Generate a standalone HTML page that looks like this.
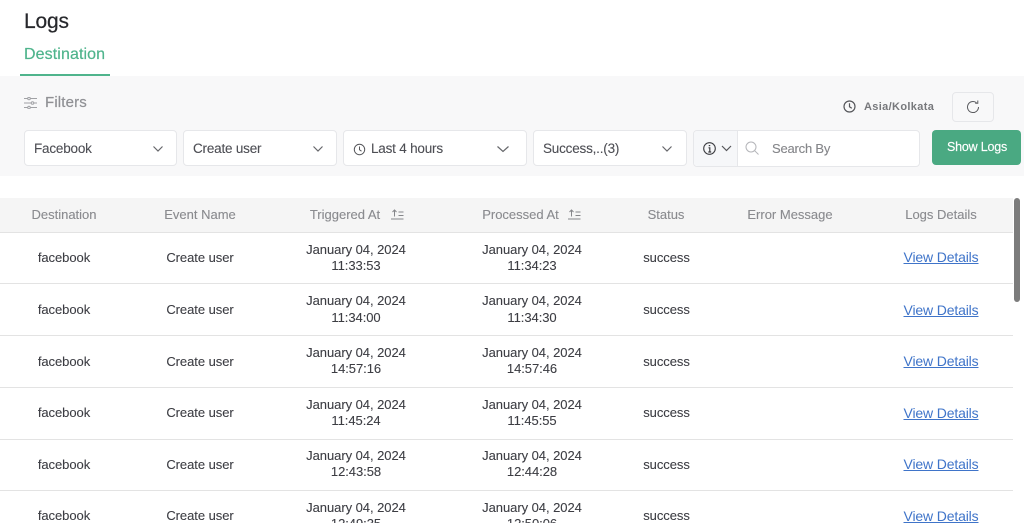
<!DOCTYPE html>
<html><head><meta charset="utf-8"><style>
html,body{margin:0;padding:0;background:#fff}
body{width:1024px;height:523px;overflow:hidden;position:relative;font-family:"Liberation Sans",sans-serif;color:#33343a}
#w{left:0;top:0;width:1024px;height:523px;overflow:hidden;filter:blur(.3px)}
div,a,svg{position:absolute}
.t{white-space:nowrap;line-height:16px}
.c{transform:translateX(-50%);text-align:center}
.box{background:#fff;border:1px solid #e6e7ea;border-radius:4px;box-sizing:border-box}
.f{font-size:13.5px;letter-spacing:-.2px;color:#4d4e54;top:141px;-webkit-text-stroke:.1px #4d4e54}
.h{font-size:13px;letter-spacing:0;color:#8a8b8f;top:207px;-webkit-text-stroke:.12px #8a8b8f}
.r{font-size:13px;letter-spacing:-.05px;color:#3c3d43;margin-top:1px;-webkit-text-stroke:.1px #3c3d43}
.l{left:0;width:1013px;height:1px;background:#e3e3e3}
a{font-size:14px;letter-spacing:-.15px;color:#3f74c9;text-decoration:underline}
svg{fill:none}
</style></head><body><div id="w">
<div class="t" style="left:24px;top:10px;font-size:21px;line-height:24px;letter-spacing:-.2px;color:#27282c;-webkit-text-stroke:.2px #27282c">Logs</div>
<div class="t" style="left:24px;top:46px;font-size:16px;line-height:18px;letter-spacing:.1px;color:#4fb48c;-webkit-text-stroke:.2px #4fb48c">Destination</div>
<div style="left:0;top:76px;width:1024px;height:100px;background:#f8f8f9"></div>
<div style="left:20px;top:74px;width:90px;height:2px;background:#4fb48c"></div>

<svg style="left:24px;top:97px" width="13" height="12" viewBox="0 0 13 12" stroke="#a0a1a5" stroke-width="1"><path d="M0 1.500H13M0 6H13M0 10.500H13"/><circle cx="5" cy="1.500" r="1.300" fill="#f8f8f9"/><circle cx="8.500" cy="6" r="1.300" fill="#f8f8f9"/><circle cx="5" cy="10.500" r="1.300" fill="#f8f8f9"/></svg>
<div class="t" style="left:45px;top:95px;font-size:15px;letter-spacing:.15px;color:#909195;-webkit-text-stroke:.2px #909195">Filters</div>

<svg style="left:843px;top:100px" width="13" height="13" viewBox="0 0 13 13" stroke="#55565a" stroke-width="1.200"><circle cx="6.500" cy="6.500" r="5.500"/><path d="M6.500 3.200V6.800L8.800 8.300"/></svg>
<div class="t" style="left:864px;top:99px;font-size:11px;font-weight:bold;letter-spacing:.35px;color:#77787c">Asia/Kolkata</div>
<div class="box" style="left:952px;top:92px;width:42px;height:30px;background:#f8f8f9"></div>
<svg style="left:966px;top:100px" width="14" height="14" viewBox="0 0 14 14" stroke="#5a5b5f" stroke-width="1"><path d="M12.500 7A5.500 5.500 0 1 1 10.500 2.800"/><path d="M10.800 .5V3.200H8.200" transform="translate(1 0)"/></svg>

<div class="box" style="left:24px;top:130px;width:153px;height:36px"></div>
<div class="t f" style="left:34px">Facebook</div>
<svg style="left:152px;top:145px" width="12" height="8" viewBox="0 0 12 8" stroke="#66676b" stroke-width="1.200"><path d="M1.500 1.500L6 6L10.500 1.500"/></svg>
<div class="box" style="left:183px;top:130px;width:154px;height:36px"></div>
<div class="t f" style="left:193px">Create user</div>
<svg style="left:312px;top:145px" width="12" height="8" viewBox="0 0 12 8" stroke="#66676b" stroke-width="1.200"><path d="M1.500 1.500L6 6L10.500 1.500"/></svg>
<div class="box" style="left:343px;top:130px;width:184px;height:36px"></div>
<svg style="left:353px;top:143px" width="13" height="13" viewBox="0 0 13 13" stroke="#55565a" stroke-width="1"><circle cx="6.500" cy="6.500" r="5.200"/><path d="M6.500 3.500V6.800L8.500 8.200"/></svg>
<div class="t f" style="left:371px">Last 4 hours</div>
<svg style="left:496px;top:145px" width="14" height="8" viewBox="0 0 14 8" stroke="#66676b" stroke-width="1.200"><path d="M1.500 1.500L7 6.500L12.500 1.500"/></svg>
<div class="box" style="left:533px;top:130px;width:154px;height:36px"></div>
<div class="t f" style="left:543px">Success,..(3)</div>
<svg style="left:661px;top:145px" width="12" height="8" viewBox="0 0 12 8" stroke="#66676b" stroke-width="1.200"><path d="M1.500 1.500L6 6L10.500 1.500"/></svg>

<div class="box" style="left:693px;top:130px;width:227px;height:37px"></div>
<div style="left:694px;top:131px;width:43px;height:35px;background:#f6f7f9;border-right:1px solid #e6e7ea;border-radius:4px 0 0 4px"></div>
<svg style="left:703px;top:142px" width="13" height="13" viewBox="0 0 13 13" stroke="#3c3d41" stroke-width="1.100"><circle cx="6.500" cy="6.500" r="5.800"/><path d="M5.500 5.800H6.800V10M5.300 10H8.200" stroke-width="1.200"/><path d="M6.500 3V4.200" stroke-width="1.500"/></svg>
<svg style="left:721px;top:145px" width="11" height="7" viewBox="0 0 11 7" stroke="#55565a" stroke-width="1.200"><path d="M1 1L5.500 5.500L10 1"/></svg>
<svg style="left:745px;top:141px" width="14" height="14" viewBox="0 0 14 14" stroke="#b4b5b9" stroke-width="1"><circle cx="6" cy="6" r="5"/><path d="M9.700 9.700L13.500 13.500"/></svg>
<div class="t" style="left:772px;top:141px;font-size:13px;letter-spacing:-.2px;color:#85868a;-webkit-text-stroke:.12px #85868a">Search By</div>
<div style="left:932px;top:130px;width:89px;height:35px;background:#4aa982;border-radius:4px"></div>
<div class="t c" style="left:977px;top:139px;font-size:12.500px;letter-spacing:-.2px;color:#fff;-webkit-text-stroke:.15px #fff">Show Logs</div>

<div style="left:0;top:198px;width:1013px;height:34px;background:#f5f5f5;border-bottom:1px solid #e3e3e3"></div>
<div class="t h c" style="left:64px">Destination</div>
<div class="t h c" style="left:200px">Event Name</div>
<div class="t h c" style="left:345px">Triggered At</div>
<svg style="left:391px;top:209px" width="13" height="11" viewBox="0 0 13 11" stroke="#85868a" stroke-width="1"><path d="M3.500 7.500V1M1.500 3L3.500 1L5.500 3M7.500 3H12.500M7.500 6.500H12.500M0 10H12.500"/></svg>
<div class="t h c" style="left:520.500px">Processed At</div>
<svg style="left:568px;top:209px" width="13" height="11" viewBox="0 0 13 11" stroke="#85868a" stroke-width="1"><path d="M3.500 7.500V1M1.500 3L3.500 1L5.500 3M7.500 3H12.500M7.500 6.500H12.500M0 10H12.500"/></svg>
<div class="t h c" style="left:666px">Status</div>
<div class="t h c" style="left:790px">Error Message</div>
<div class="t h c" style="left:941px">Logs Details</div>

<div class="t r c" style="left:64px;top:249px">facebook</div><div class="t r c" style="left:200px;top:249px">Create user</div>
<div class="t r c" style="left:356px;top:241px">January 04, 2024</div><div class="t r c" style="left:356px;top:257px">11:33:53</div>
<div class="t r c" style="left:532px;top:241px">January 04, 2024</div><div class="t r c" style="left:532px;top:257px">11:34:23</div>
<div class="t r c" style="left:666.500px;top:249px">success</div><a class="t c" href="#" style="left:941px;top:249px">View Details</a>
<div class="l" style="top:283px"></div>

<div class="t r c" style="left:64px;top:301px">facebook</div><div class="t r c" style="left:200px;top:301px">Create user</div>
<div class="t r c" style="left:356px;top:292px">January 04, 2024</div><div class="t r c" style="left:356px;top:309px">11:34:00</div>
<div class="t r c" style="left:532px;top:292px">January 04, 2024</div><div class="t r c" style="left:532px;top:309px">11:34:30</div>
<div class="t r c" style="left:666.500px;top:301px">success</div><a class="t c" href="#" style="left:941px;top:302px">View Details</a>
<div class="l" style="top:335px"></div>

<div class="t r c" style="left:64px;top:353px">facebook</div><div class="t r c" style="left:200px;top:353px">Create user</div>
<div class="t r c" style="left:356px;top:344px">January 04, 2024</div><div class="t r c" style="left:356px;top:360px">14:57:16</div>
<div class="t r c" style="left:532px;top:344px">January 04, 2024</div><div class="t r c" style="left:532px;top:360px">14:57:46</div>
<div class="t r c" style="left:666.500px;top:353px">success</div><a class="t c" href="#" style="left:941px;top:353px">View Details</a>
<div class="l" style="top:387px"></div>

<div class="t r c" style="left:64px;top:404px">facebook</div><div class="t r c" style="left:200px;top:404px">Create user</div>
<div class="t r c" style="left:356px;top:396px">January 04, 2024</div><div class="t r c" style="left:356px;top:412px">11:45:24</div>
<div class="t r c" style="left:532px;top:396px">January 04, 2024</div><div class="t r c" style="left:532px;top:412px">11:45:55</div>
<div class="t r c" style="left:666.500px;top:404px">success</div><a class="t c" href="#" style="left:941px;top:405px">View Details</a>
<div class="l" style="top:439px"></div>

<div class="t r c" style="left:64px;top:456px">facebook</div><div class="t r c" style="left:200px;top:456px">Create user</div>
<div class="t r c" style="left:356px;top:447px">January 04, 2024</div><div class="t r c" style="left:356px;top:463px">12:43:58</div>
<div class="t r c" style="left:532px;top:447px">January 04, 2024</div><div class="t r c" style="left:532px;top:463px">12:44:28</div>
<div class="t r c" style="left:666.500px;top:456px">success</div><a class="t c" href="#" style="left:941px;top:456px">View Details</a>
<div class="l" style="top:490px"></div>

<div class="t r c" style="left:64px;top:507px">facebook</div><div class="t r c" style="left:200px;top:507px">Create user</div>
<div class="t r c" style="left:356px;top:499px">January 04, 2024</div><div class="t r c" style="left:356px;top:515px">12:49:35</div>
<div class="t r c" style="left:532px;top:499px">January 04, 2024</div><div class="t r c" style="left:532px;top:515px">12:50:06</div>
<div class="t r c" style="left:666.500px;top:507px">success</div><a class="t c" href="#" style="left:941px;top:508px">View Details</a>

<div style="left:1014px;top:198px;width:6px;height:104px;background:#7c7c7c;border-radius:3px"></div>
</div></body></html>
